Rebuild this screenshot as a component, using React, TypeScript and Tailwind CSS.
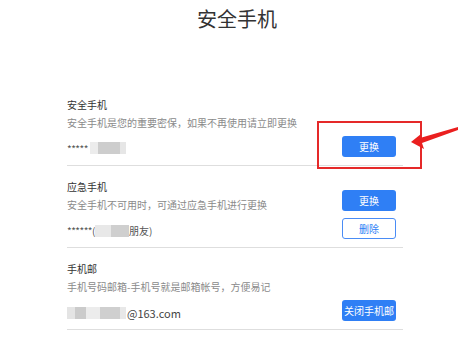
import React from "react";

const font = { fontFamily: '"Noto Sans CJK SC", "Liberation Sans", sans-serif' };

function Blur({ parts }: { parts: [number, string][] }) {
  return (
    <span className="inline-flex h-[12px] items-stretch blur-[0.6px]">
      {parts.map(([w, c], i) => (
        <span key={i} style={{ width: w, background: c }} />
      ))}
    </span>
  );
}

function Section({
  label,
  desc,
  value,
  buttons,
}: {
  label: string;
  desc: string;
  value: React.ReactNode;
  buttons: React.ReactNode;
}) {
  return (
    <div className="flex h-[82px] items-end justify-between border-b border-[#dedede]">
      <div className="flex h-full flex-col pt-[14px] text-[10px]">
        <div className="h-[14px] leading-[14px] text-[#333]">{label}</div>
        <div className="mt-[4px] h-[14px] leading-[14px] text-[#8a8a8a]">{desc}</div>
        <div className="mt-[12px] flex h-[14px] items-center leading-[14px] text-[#555]">{value}</div>
      </div>
      <div className="flex flex-col gap-[7px] pb-[8px] pr-[7px]">{buttons}</div>
    </div>
  );
}

function BlueBtn({ children }: { children: React.ReactNode }) {
  return (
    <div className="flex h-[21px] w-[54px] items-center justify-center rounded-[3px] bg-[#2f7ff5] text-[10px] text-white">
      {children}
    </div>
  );
}

export default function App() {
  return (
    <div className="relative h-[351px] w-[474px] overflow-hidden bg-white" style={font}>
      <div className="pt-[5px] text-center text-[20px] leading-[28px] text-[#333]">安全手机</div>
      <div className="ml-[67px] mt-[51px] w-[336px]">
        <Section
          label="安全手机"
          desc="安全手机是您的重要密保，如果不再使用请立即更换"
          value={
            <>
              <span className="tracking-[-0.5px]">*****</span>
              <span className="ml-[2px]">
                <Blur parts={[[8, "#ececec"], [22, "#cdcdcd"], [6, "#e6e6e6"]]} />
              </span>
            </>
          }
          buttons={<BlueBtn>更换</BlueBtn>}
        />
        <Section
          label="应急手机"
          desc="安全手机不可用时，可通过应急手机进行更换"
          value={
            <>
              <span className="tracking-[-0.5px]">******(</span>
              <Blur parts={[[16, "#e8e8e8"], [18, "#cfcfcf"]]} />
              <span>朋友)</span>
            </>
          }
          buttons={
            <>
              <BlueBtn>更换</BlueBtn>
              <div className="flex h-[21px] w-[54px] items-center justify-center rounded-[3px] border border-[#4a8cf5] bg-white text-[10px] text-[#2f7ff5]">
                删除
              </div>
            </>
          }
        />
        <Section
          label="手机邮"
          desc="手机号码邮箱-手机号就是邮箱帐号，方便易记"
          value={
            <>
              <Blur parts={[[8, "#e4e4e4"], [11, "#cbcbcb"], [14, "#ececec"], [20, "#cfcfcf"], [6, "#e8e8e8"]]} />
              <span className="ml-[1px] text-[11px] text-[#444]">@163.com</span>
            </>
          }
          buttons={<BlueBtn>关闭手机邮</BlueBtn>}
        />
      </div>
      <div className="absolute left-[317px] top-[121px] h-[48px] w-[105px] border-2 border-[#e52929]" />
      <svg className="absolute left-0 top-0" width="474" height="351" viewBox="0 0 474 351">
        <polygon
          points="411,142 421,134 420,138 458,127 458,130 422,143 424,149"
          fill="#ea1f1f"
        />
      </svg>
    </div>
  );
}
